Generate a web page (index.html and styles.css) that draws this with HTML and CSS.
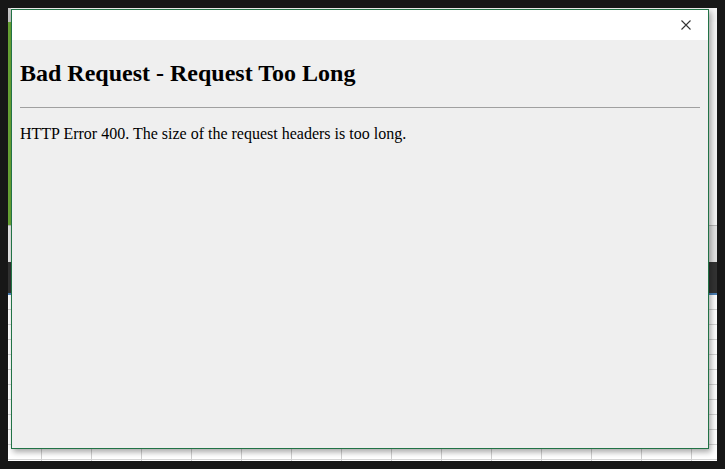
FILE: index.html
```html
<!DOCTYPE html>
<html>
<head>
  <meta charset="UTF-8">
  <meta name="viewport" content="width=device-width, initial-scale=1.0">
  <title>Bad Request</title>
  <link rel="stylesheet" href="styles.css">
</head>
<body>

  <div class="screen">

    <!-- sheet behind the dialog -->
    <div class="sheet">
      <div class="band band-top"></div>
      <div class="band band-green"></div>
      <div class="band band-grey"></div>
      <div class="band band-dark"></div>
      <div class="band band-grid"></div>
    </div>

    <div class="dialog">
      <div class="dialog-header">
        <button class="close-btn" title="Close">
          <svg width="10" height="10" viewBox="0 0 10 10">
            <path d="M0.5 0.5 L9.5 9.5 M9.5 0.5 L0.5 9.5" stroke="#333" stroke-width="1.1" fill="none"/>
          </svg>
        </button>
      </div>
      <div class="dialog-body">
        <h2>Bad Request - Request Too Long</h2>
        <hr>
        <p>HTTP Error 400. The size of the request headers is too long.</p>
      </div>
    </div>

  </div>

</body>
</html>
```

FILE: styles.css
```css
* {
  box-sizing: border-box;
}

body {
  margin: 0;
  background-color: #171717;
  font-family: 'Liberation Serif', 'Times New Roman', serif;
}

.screen {
  position: relative;
  width: 709px;
  height: 453px;
  margin: 8px;
  background-color: #fff;
  overflow: hidden;
}

.sheet {
  display: flex;
  flex-direction: column;
  height: 100%;
}

.band {
  flex-shrink: 0;
}

.band-top {
  height: 14px;
  background: linear-gradient(to right, #c8c8c8 0 3px, #f4f4f4 3px);
}

/* green tab on the left edge, plain sheet on the right */
.band-green {
  height: 203px;
  background: linear-gradient(to right, #6aa636 0 3px, #f6f6f6 3px);
}

.band-grey {
  height: 37px;
  background-color: #e4e4e4;
  border-top: 1px solid #b8b8b8;
}

.band-dark {
  height: 33px;
  background-color: #333;
  border-bottom: 2px solid #4a7fb5;
}

.band-grid {
  flex: 1;
  background-color: #fff;
  background-image:
    repeating-linear-gradient(to right, transparent 0 33px, #d0d0d0 33px 34px, transparent 34px 50px),
    repeating-linear-gradient(to bottom, transparent 0 14px, #d4d4d4 14px 15px);
}

.dialog {
  position: absolute;
  top: 1px;
  left: 3px;
  width: 698px;
  height: 440px;
  border: 1px solid #217346;
  background-color: #efefef;
  box-shadow: 2px 3px 6px rgba(0, 0, 0, 0.35);
  display: flex;
  flex-direction: column;
}

.dialog-header {
  height: 30px;
  background-color: #fff;
  display: flex;
  justify-content: flex-end;
  align-items: center;
  padding-right: 17px;
}

.close-btn {
  border: none;
  background: none;
  padding: 0;
  width: 10px;
  height: 10px;
  display: flex;
  cursor: pointer;
}

.dialog-body {
  flex: 1;
  padding: 8px;
  color: #000;
}

h2 {
  font-size: 24px;
  font-weight: bold;
  margin: 12px 0 20px;
}

hr {
  border: none;
  border-top: 1px solid #a0a0a0;
  margin: 0;
}

p {
  font-size: 16px;
  margin: 17px 0;
}
```
